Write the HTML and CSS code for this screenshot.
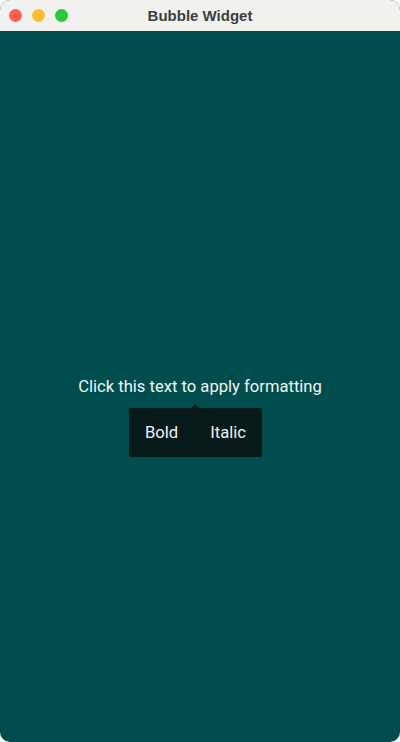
FILE: index.html
```html
<!DOCTYPE html>
<html>
<head>
<meta charset="utf-8">
<link rel="stylesheet" href="styles.css">
</head>
<body>
<div class="window">
  <div class="titlebar">
    <div class="lights">
      <span class="light red"></span>
      <span class="light yellow"></span>
      <span class="light green"></span>
    </div>
    <div class="title">Bubble Widget</div>
  </div>
  <div class="content">
    <div class="anchor">
      <span class="label">Click this text to apply formatting</span>
      <div class="bubble">
        <span class="btn">Bold</span>
        <span class="btn">Italic</span>
      </div>
    </div>
  </div>
</div>
</body>
</html>
```
FILE: styles.css
```css
html, body {
  margin: 0;
  padding: 0;
  background: #ffffff;
  height: 100%;
}
.window {
  width: 400px;
  height: 742px;
  border-radius: 10px;
  overflow: hidden;
  display: flex;
  flex-direction: column;
  background: #004d4d;
}
.titlebar {
  height: 31px;
  flex: 0 0 31px;
  background: #f1f1ee;
  position: relative;
  display: flex;
  align-items: center;
  justify-content: center;
}
.lights {
  position: absolute;
  left: 9px;
  top: 9px;
  display: flex;
  gap: 10px;
}
.light {
  width: 13px;
  height: 13px;
  border-radius: 50%;
  display: block;
}
.red { background: #fe5f57; }
.yellow { background: #febc2e; }
.green { background: #28c840; }
.title {
  font-family: "Liberation Sans", Arial, sans-serif;
  font-weight: bold;
  font-size: 15px;
  color: #3d3d3d;
}
.content {
  flex: 1;
  display: flex;
  align-items: center;
  justify-content: center;
}
.anchor {
  position: relative;
}
.label {
  font-family: Roboto, sans-serif;
  font-size: 16.6px;
  line-height: 20px;
  color: #f4f4f4;
  display: block;
}
.bubble {
  position: absolute;
  top: 31px;
  left: 50%;
  transform: translateX(calc(-50% - 4.5px));
  background: #071a1a;
  border-radius: 2px;
  display: flex;
  height: 49px;
  align-items: center;
}
.bubble::before {
  content: "";
  position: absolute;
  top: -4px;
  left: 50%;
  margin-left: -4px;
  border-left: 4px solid transparent;
  border-right: 4px solid transparent;
  border-bottom: 4px solid #071a1a;
}
.btn {
  font-family: Roboto, sans-serif;
  font-size: 16.6px;
  color: #f2f2f2;
  padding: 0 16px;
  line-height: 49px;
}
```
